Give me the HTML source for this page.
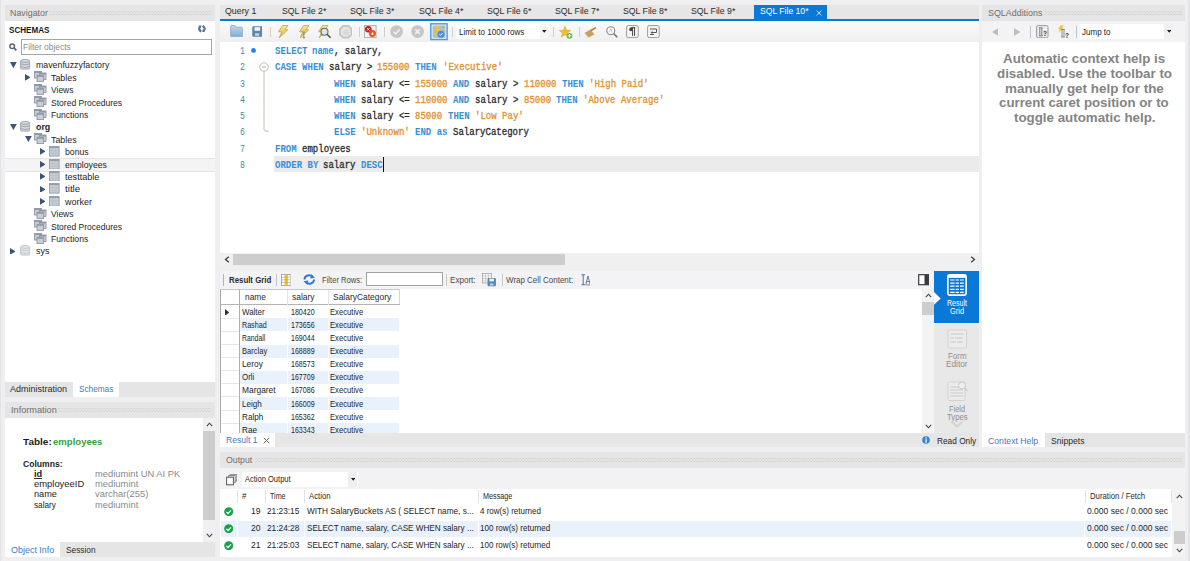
<!DOCTYPE html><html><head><meta charset="utf-8"><style>
html,body{margin:0;padding:0;}
body{width:1190px;height:561px;overflow:hidden;position:relative;background:#efeff1;font-family:'Liberation Sans',sans-serif;}
.r{position:absolute;}
.t{position:absolute;white-space:pre;transform-origin:0 0;}
</style></head><body><div class="r" style="left:0px;top:0px;width:1px;height:561px;background:#e3e3e5;"></div><div class="r" style="left:5px;top:5px;width:210px;height:16px;background:#e5e5e5;"></div><span class="t" style="left:10.00px;top:7.76px;font-size:9.5px;line-height:9.5px;color:#6e6e6e;transform:scaleX(0.9318);">Navigator</span><svg class="r" style="left:49px;top:10.8px" width="162" height="4.6"><defs><pattern id="gp49_13" width="3" height="3.2" patternUnits="userSpaceOnUse"><rect x="0.6" y="0" width="1.1" height="0.9" fill="#c6c6c6"/><rect x="2.1" y="1.6" width="1.1" height="0.9" fill="#c6c6c6"/></pattern></defs><rect x="0" y="0.1" width="162" height="4.4" fill="url(#gp49_13)"/></svg><div class="r" style="left:5px;top:21px;width:210px;height:361px;background:#fff;"></div><span class="t" style="left:9.20px;top:24.76px;font-size:9.5px;line-height:9.5px;color:#1a1a1a;font-weight:bold;transform:scaleX(0.8502);">SCHEMAS</span><svg class="r" style="left:196.8px;top:24.6px;" width="9.6" height="8" viewBox="0 0 9.6 8"><path d="M3.2 1.6 Q0.6 4 4.2 6.6" fill="none" stroke="#5f7596" stroke-width="2.3"/><polygon points="1.6,0.6 4.6,0.6 3.4,3.4" fill="#5f7596"/><path d="M5.6 0.9 Q9.2 3.2 6.4 6" fill="none" stroke="#5f7596" stroke-width="2.3"/><polygon points="8,7 5,7 6.2,4.3" fill="#5f7596"/></svg><svg class="r" style="left:8.5px;top:43px;" width="8" height="8" viewBox="0 0 8 8"><circle cx="3.2" cy="3.2" r="2.3" fill="none" stroke="#5b6675" stroke-width="1.5"/><path d="M4.9 4.9 L7.4 7.4" stroke="#5b6675" stroke-width="1.8"/></svg><div class="r" style="left:21px;top:39.2px;width:188.5px;height:13.6px;background:#fff;border:1px solid #a6a6a6;"></div><span class="t" style="left:23.00px;top:41.76px;font-size:9.5px;line-height:9.5px;color:#8c8c8c;transform:scaleX(0.8856);">Filter objects</span><svg class="r" style="left:10px;top:62.0px;" width="6.8" height="6.1" viewBox="0 0 6.8 6.1"><polygon points="0,0 6.8,0 3.4,6.1" fill="#3d5473"/></svg><svg class="r" style="left:20.3px;top:58.8px;" width="10.5" height="11" viewBox="0 0 10.5 11"><rect x="0.6" y="1.5" width="9" height="8.6" rx="1" fill="#d3d7de" stroke="#9aa2ad" stroke-width="0.9"/><ellipse cx="5.1" cy="1.9" rx="4.5" ry="1.5" fill="#d3d7de" stroke="#9aa2ad" stroke-width="0.9"/><path d="M0.6 4.8 Q5.1 6.8 9.6 4.8 M0.6 7.6 Q5.1 9.6 9.6 7.6" fill="none" stroke="#9aa2ad" stroke-width="0.9"/></svg><span class="t" style="left:35.70px;top:60.36px;font-size:9.5px;line-height:9.5px;color:#1e1e1e;transform:scaleX(0.9255);">mavenfuzzyfactory</span><svg class="r" style="left:24.7px;top:74.0px;" width="5.8" height="6.8" viewBox="0 0 5.8 6.8"><polygon points="0,0 5.8,3.4 0,6.8" fill="#3d5473"/></svg><svg class="r" style="left:34px;top:71.30000000000001px;" width="12.5" height="11" viewBox="0 0 12.5 11"><rect x="0.5" y="0.5" width="7" height="6.5" fill="#c9ced6" stroke="#8f98a5" stroke-width="0.9"/><rect x="0.5" y="0.5" width="7" height="1.5" fill="#8f98a5"/><rect x="5.5" y="2" width="6.5" height="6.5" fill="#c9ced6" stroke="#8f98a5" stroke-width="0.9"/><rect x="5.5" y="2" width="6.5" height="1.5" fill="#8f98a5"/><rect x="3" y="4.3" width="6.5" height="6.3" fill="#c9ced6" stroke="#8f98a5" stroke-width="0.9"/><rect x="3" y="4.3" width="6.5" height="1.5" fill="#8f98a5"/></svg><span class="t" style="left:50.60px;top:72.76px;font-size:9.5px;line-height:9.5px;color:#1e1e1e;transform:scaleX(0.9320);">Tables</span><svg class="r" style="left:34px;top:83.7px;" width="12.5" height="11" viewBox="0 0 12.5 11"><rect x="0.5" y="0.5" width="7" height="6.5" fill="#c9ced6" stroke="#8f98a5" stroke-width="0.9"/><rect x="0.5" y="0.5" width="7" height="1.5" fill="#8f98a5"/><rect x="5.5" y="2" width="6.5" height="6.5" fill="#c9ced6" stroke="#8f98a5" stroke-width="0.9"/><rect x="5.5" y="2" width="6.5" height="1.5" fill="#8f98a5"/><rect x="3" y="4.3" width="6.5" height="6.3" fill="#c9ced6" stroke="#8f98a5" stroke-width="0.9"/><rect x="3" y="4.3" width="6.5" height="1.5" fill="#8f98a5"/></svg><span class="t" style="left:50.60px;top:85.16px;font-size:9.5px;line-height:9.5px;color:#1e1e1e;transform:scaleX(0.8939);">Views</span><svg class="r" style="left:34px;top:96.10000000000001px;" width="12.5" height="11" viewBox="0 0 12.5 11"><rect x="0.5" y="0.5" width="7" height="6.5" fill="#c9ced6" stroke="#8f98a5" stroke-width="0.9"/><rect x="0.5" y="0.5" width="7" height="1.5" fill="#8f98a5"/><rect x="5.5" y="2" width="6.5" height="6.5" fill="#c9ced6" stroke="#8f98a5" stroke-width="0.9"/><rect x="5.5" y="2" width="6.5" height="1.5" fill="#8f98a5"/><rect x="3" y="4.3" width="6.5" height="6.3" fill="#c9ced6" stroke="#8f98a5" stroke-width="0.9"/><rect x="3" y="4.3" width="6.5" height="1.5" fill="#8f98a5"/></svg><span class="t" style="left:50.60px;top:97.56px;font-size:9.5px;line-height:9.5px;color:#1e1e1e;transform:scaleX(0.8975);">Stored Procedures</span><svg class="r" style="left:34px;top:108.5px;" width="12.5" height="11" viewBox="0 0 12.5 11"><rect x="0.5" y="0.5" width="7" height="6.5" fill="#c9ced6" stroke="#8f98a5" stroke-width="0.9"/><rect x="0.5" y="0.5" width="7" height="1.5" fill="#8f98a5"/><rect x="5.5" y="2" width="6.5" height="6.5" fill="#c9ced6" stroke="#8f98a5" stroke-width="0.9"/><rect x="5.5" y="2" width="6.5" height="1.5" fill="#8f98a5"/><rect x="3" y="4.3" width="6.5" height="6.3" fill="#c9ced6" stroke="#8f98a5" stroke-width="0.9"/><rect x="3" y="4.3" width="6.5" height="1.5" fill="#8f98a5"/></svg><span class="t" style="left:50.60px;top:109.96px;font-size:9.5px;line-height:9.5px;color:#1e1e1e;transform:scaleX(0.9032);">Functions</span><svg class="r" style="left:10px;top:124.0px;" width="6.8" height="6.1" viewBox="0 0 6.8 6.1"><polygon points="0,0 6.8,0 3.4,6.1" fill="#3d5473"/></svg><svg class="r" style="left:20.3px;top:120.8px;" width="10.5" height="11" viewBox="0 0 10.5 11"><rect x="0.6" y="1.5" width="9" height="8.6" rx="1" fill="#d3d7de" stroke="#9aa2ad" stroke-width="0.9"/><ellipse cx="5.1" cy="1.9" rx="4.5" ry="1.5" fill="#d3d7de" stroke="#9aa2ad" stroke-width="0.9"/><path d="M0.6 4.8 Q5.1 6.8 9.6 4.8 M0.6 7.6 Q5.1 9.6 9.6 7.6" fill="none" stroke="#9aa2ad" stroke-width="0.9"/></svg><span class="t" style="left:35.70px;top:122.36px;font-size:9.5px;line-height:9.5px;color:#1e1e1e;font-weight:bold;transform:scaleX(0.9273);">org</span><svg class="r" style="left:25px;top:136.4px;" width="6.8" height="6.1" viewBox="0 0 6.8 6.1"><polygon points="0,0 6.8,0 3.4,6.1" fill="#3d5473"/></svg><svg class="r" style="left:34px;top:133.3px;" width="12.5" height="11" viewBox="0 0 12.5 11"><rect x="0.5" y="0.5" width="7" height="6.5" fill="#c9ced6" stroke="#8f98a5" stroke-width="0.9"/><rect x="0.5" y="0.5" width="7" height="1.5" fill="#8f98a5"/><rect x="5.5" y="2" width="6.5" height="6.5" fill="#c9ced6" stroke="#8f98a5" stroke-width="0.9"/><rect x="5.5" y="2" width="6.5" height="1.5" fill="#8f98a5"/><rect x="3" y="4.3" width="6.5" height="6.3" fill="#c9ced6" stroke="#8f98a5" stroke-width="0.9"/><rect x="3" y="4.3" width="6.5" height="1.5" fill="#8f98a5"/></svg><span class="t" style="left:50.60px;top:134.76px;font-size:9.5px;line-height:9.5px;color:#1e1e1e;transform:scaleX(0.9320);">Tables</span><svg class="r" style="left:39.7px;top:148.39999999999998px;" width="5.8" height="6.8" viewBox="0 0 5.8 6.8"><polygon points="0,0 5.8,3.4 0,6.8" fill="#3d5473"/></svg><svg class="r" style="left:49.3px;top:146.1px;" width="10.6" height="10.6" viewBox="0 0 10.6 10.6"><rect x="0.5" y="0.5" width="9.6" height="9.6" fill="#c8ced7" stroke="#949dab" stroke-width="0.9"/><rect x="0.5" y="0.5" width="9.6" height="1.6" fill="#949dab"/><path d="M3.7 2 V10 M6.9 2 V10 M0.5 4.7 H10 M0.5 7.4 H10" stroke="#b3bac4" stroke-width="0.6"/></svg><span class="t" style="left:65.40px;top:147.16px;font-size:9.5px;line-height:9.5px;color:#1e1e1e;transform:scaleX(0.9115);">bonus</span><div class="r" style="left:5px;top:157.9px;width:210px;height:11.8px;background:#f4f4f4;border-top:0.6px solid #e6e6e6;border-bottom:0.6px solid #e6e6e6;"></div><svg class="r" style="left:39.7px;top:160.8px;" width="5.8" height="6.8" viewBox="0 0 5.8 6.8"><polygon points="0,0 5.8,3.4 0,6.8" fill="#3d5473"/></svg><svg class="r" style="left:49.3px;top:158.50000000000003px;" width="10.6" height="10.6" viewBox="0 0 10.6 10.6"><rect x="0.5" y="0.5" width="9.6" height="9.6" fill="#c8ced7" stroke="#949dab" stroke-width="0.9"/><rect x="0.5" y="0.5" width="9.6" height="1.6" fill="#949dab"/><path d="M3.7 2 V10 M6.9 2 V10 M0.5 4.7 H10 M0.5 7.4 H10" stroke="#b3bac4" stroke-width="0.6"/></svg><span class="t" style="left:65.40px;top:159.56px;font-size:9.5px;line-height:9.5px;color:#1e1e1e;transform:scaleX(0.9118);">employees</span><svg class="r" style="left:39.7px;top:173.2px;" width="5.8" height="6.8" viewBox="0 0 5.8 6.8"><polygon points="0,0 5.8,3.4 0,6.8" fill="#3d5473"/></svg><svg class="r" style="left:49.3px;top:170.9px;" width="10.6" height="10.6" viewBox="0 0 10.6 10.6"><rect x="0.5" y="0.5" width="9.6" height="9.6" fill="#c8ced7" stroke="#949dab" stroke-width="0.9"/><rect x="0.5" y="0.5" width="9.6" height="1.6" fill="#949dab"/><path d="M3.7 2 V10 M6.9 2 V10 M0.5 4.7 H10 M0.5 7.4 H10" stroke="#b3bac4" stroke-width="0.6"/></svg><span class="t" style="left:65.40px;top:171.96px;font-size:9.5px;line-height:9.5px;color:#1e1e1e;transform:scaleX(0.9576);">testtable</span><svg class="r" style="left:39.7px;top:185.6px;" width="5.8" height="6.8" viewBox="0 0 5.8 6.8"><polygon points="0,0 5.8,3.4 0,6.8" fill="#3d5473"/></svg><svg class="r" style="left:49.3px;top:183.3px;" width="10.6" height="10.6" viewBox="0 0 10.6 10.6"><rect x="0.5" y="0.5" width="9.6" height="9.6" fill="#c8ced7" stroke="#949dab" stroke-width="0.9"/><rect x="0.5" y="0.5" width="9.6" height="1.6" fill="#949dab"/><path d="M3.7 2 V10 M6.9 2 V10 M0.5 4.7 H10 M0.5 7.4 H10" stroke="#b3bac4" stroke-width="0.6"/></svg><span class="t" style="left:65.40px;top:184.36px;font-size:9.5px;line-height:9.5px;color:#1e1e1e;transform:scaleX(1.0272);">title</span><svg class="r" style="left:39.7px;top:198.0px;" width="5.8" height="6.8" viewBox="0 0 5.8 6.8"><polygon points="0,0 5.8,3.4 0,6.8" fill="#3d5473"/></svg><svg class="r" style="left:49.3px;top:195.70000000000002px;" width="10.6" height="10.6" viewBox="0 0 10.6 10.6"><rect x="0.5" y="0.5" width="9.6" height="9.6" fill="#c8ced7" stroke="#949dab" stroke-width="0.9"/><rect x="0.5" y="0.5" width="9.6" height="1.6" fill="#949dab"/><path d="M3.7 2 V10 M6.9 2 V10 M0.5 4.7 H10 M0.5 7.4 H10" stroke="#b3bac4" stroke-width="0.6"/></svg><span class="t" style="left:65.40px;top:196.76px;font-size:9.5px;line-height:9.5px;color:#1e1e1e;transform:scaleX(0.9433);">worker</span><svg class="r" style="left:34px;top:207.70000000000002px;" width="12.5" height="11" viewBox="0 0 12.5 11"><rect x="0.5" y="0.5" width="7" height="6.5" fill="#c9ced6" stroke="#8f98a5" stroke-width="0.9"/><rect x="0.5" y="0.5" width="7" height="1.5" fill="#8f98a5"/><rect x="5.5" y="2" width="6.5" height="6.5" fill="#c9ced6" stroke="#8f98a5" stroke-width="0.9"/><rect x="5.5" y="2" width="6.5" height="1.5" fill="#8f98a5"/><rect x="3" y="4.3" width="6.5" height="6.3" fill="#c9ced6" stroke="#8f98a5" stroke-width="0.9"/><rect x="3" y="4.3" width="6.5" height="1.5" fill="#8f98a5"/></svg><span class="t" style="left:50.60px;top:209.16px;font-size:9.5px;line-height:9.5px;color:#1e1e1e;transform:scaleX(0.8939);">Views</span><svg class="r" style="left:34px;top:220.10000000000002px;" width="12.5" height="11" viewBox="0 0 12.5 11"><rect x="0.5" y="0.5" width="7" height="6.5" fill="#c9ced6" stroke="#8f98a5" stroke-width="0.9"/><rect x="0.5" y="0.5" width="7" height="1.5" fill="#8f98a5"/><rect x="5.5" y="2" width="6.5" height="6.5" fill="#c9ced6" stroke="#8f98a5" stroke-width="0.9"/><rect x="5.5" y="2" width="6.5" height="1.5" fill="#8f98a5"/><rect x="3" y="4.3" width="6.5" height="6.3" fill="#c9ced6" stroke="#8f98a5" stroke-width="0.9"/><rect x="3" y="4.3" width="6.5" height="1.5" fill="#8f98a5"/></svg><span class="t" style="left:50.60px;top:221.56px;font-size:9.5px;line-height:9.5px;color:#1e1e1e;transform:scaleX(0.8975);">Stored Procedures</span><svg class="r" style="left:34px;top:232.5px;" width="12.5" height="11" viewBox="0 0 12.5 11"><rect x="0.5" y="0.5" width="7" height="6.5" fill="#c9ced6" stroke="#8f98a5" stroke-width="0.9"/><rect x="0.5" y="0.5" width="7" height="1.5" fill="#8f98a5"/><rect x="5.5" y="2" width="6.5" height="6.5" fill="#c9ced6" stroke="#8f98a5" stroke-width="0.9"/><rect x="5.5" y="2" width="6.5" height="1.5" fill="#8f98a5"/><rect x="3" y="4.3" width="6.5" height="6.3" fill="#c9ced6" stroke="#8f98a5" stroke-width="0.9"/><rect x="3" y="4.3" width="6.5" height="1.5" fill="#8f98a5"/></svg><span class="t" style="left:50.60px;top:233.96px;font-size:9.5px;line-height:9.5px;color:#1e1e1e;transform:scaleX(0.9032);">Functions</span><svg class="r" style="left:9.7px;top:247.6px;" width="5.8" height="6.8" viewBox="0 0 5.8 6.8"><polygon points="0,0 5.8,3.4 0,6.8" fill="#3d5473"/></svg><svg class="r" style="left:20.3px;top:244.8px;" width="10.5" height="11" viewBox="0 0 10.5 11"><rect x="0.6" y="1.5" width="9" height="8.6" rx="1" fill="#e3e6ea" stroke="#c0c5cc" stroke-width="0.9"/><ellipse cx="5.1" cy="1.9" rx="4.5" ry="1.5" fill="#e3e6ea" stroke="#c0c5cc" stroke-width="0.9"/><path d="M0.6 4.8 Q5.1 6.8 9.6 4.8 M0.6 7.6 Q5.1 9.6 9.6 7.6" fill="none" stroke="#c0c5cc" stroke-width="0.9"/></svg><span class="t" style="left:35.70px;top:246.36px;font-size:9.5px;line-height:9.5px;color:#1e1e1e;transform:scaleX(0.9404);">sys</span><div class="r" style="left:5px;top:382px;width:210px;height:15px;background:#e5e5e5;"></div><div class="r" style="left:73px;top:382px;width:46px;height:15px;background:#fff;"></div><span class="t" style="left:10.00px;top:384.46px;font-size:9.5px;line-height:9.5px;color:#2b2b2b;transform:scaleX(0.9468);">Administration</span><span class="t" style="left:78.50px;top:384.46px;font-size:9.5px;line-height:9.5px;color:#3a7cc3;transform:scaleX(0.8660);">Schemas</span><div class="r" style="left:5px;top:402px;width:210px;height:16px;background:#e5e5e5;"></div><span class="t" style="left:10.50px;top:404.56px;font-size:9.5px;line-height:9.5px;color:#6e6e6e;transform:scaleX(0.9636);">Information</span><svg class="r" style="left:58px;top:407.8px" width="153" height="4.6"><defs><pattern id="gp58_410" width="3" height="3.2" patternUnits="userSpaceOnUse"><rect x="0.6" y="0" width="1.1" height="0.9" fill="#c6c6c6"/><rect x="2.1" y="1.6" width="1.1" height="0.9" fill="#c6c6c6"/></pattern></defs><rect x="0" y="0.1" width="153" height="4.4" fill="url(#gp58_410)"/></svg><div class="r" style="left:5px;top:418px;width:210px;height:124.2px;background:#fff;"></div><div class="r" style="left:203px;top:418px;width:11.5px;height:124.2px;background:#f0f0f0;"></div><div class="r" style="left:203px;top:431px;width:11.5px;height:88.5px;background:#cdcdcd;"></div><svg class="r" style="left:205.5px;top:422px;" width="7" height="5" viewBox="0 0 7 5"><path d="M0.8 4.2 L3.5 1.2 L6.2 4.2" fill="none" stroke="#404040" stroke-width="1.1"/></svg><svg class="r" style="left:205.5px;top:533px;" width="7" height="5" viewBox="0 0 7 5"><path d="M0.8 0.8 L3.5 3.8 L6.2 0.8" fill="none" stroke="#404040" stroke-width="1.1"/></svg><span class="t" style="left:22.80px;top:436.96px;font-size:9.5px;line-height:9.5px;color:#1e1e1e;font-weight:bold;transform:scaleX(1.0557);">Table:</span><span class="t" style="left:53.30px;top:436.96px;font-size:9.5px;line-height:9.5px;color:#3aa03a;font-weight:bold;transform:scaleX(1.0056);">employees</span><span class="t" style="left:22.80px;top:458.66px;font-size:9.5px;line-height:9.5px;color:#1e1e1e;font-weight:bold;transform:scaleX(0.9016);">Columns:</span><span class="t" style="left:33.70px;top:469.73px;font-size:9.3px;line-height:9.3px;color:#1e1e1e;font-weight:bold;transform:scaleX(0.9921);">id</span><span class="t" style="left:94.70px;top:469.73px;font-size:9.3px;line-height:9.3px;color:#8a8a8a;transform:scaleX(1.0067);">mediumint UN AI PK</span><span class="t" style="left:33.70px;top:480.03px;font-size:9.3px;line-height:9.3px;color:#1e1e1e;transform:scaleX(1.0119);">employeeID</span><span class="t" style="left:94.70px;top:480.03px;font-size:9.3px;line-height:9.3px;color:#8a8a8a;transform:scaleX(1.0095);">mediumint</span><span class="t" style="left:33.70px;top:490.33px;font-size:9.3px;line-height:9.3px;color:#1e1e1e;transform:scaleX(0.9843);">name</span><span class="t" style="left:94.70px;top:490.33px;font-size:9.3px;line-height:9.3px;color:#8a8a8a;transform:scaleX(1.0110);">varchar(255)</span><span class="t" style="left:33.70px;top:500.63px;font-size:9.3px;line-height:9.3px;color:#1e1e1e;transform:scaleX(0.8786);">salary</span><span class="t" style="left:94.70px;top:500.63px;font-size:9.3px;line-height:9.3px;color:#8a8a8a;transform:scaleX(1.0095);">mediumint</span><div class="r" style="left:33.7px;top:478.3px;width:8.6px;height:0.8px;background:#333;"></div><div class="r" style="left:5px;top:542.2px;width:210px;height:14.4px;background:#e5e5e5;"></div><div class="r" style="left:5px;top:542.2px;width:55.4px;height:14.4px;background:#fff;"></div><span class="t" style="left:10.50px;top:544.56px;font-size:9.5px;line-height:9.5px;color:#3a7cc3;transform:scaleX(0.9423);">Object Info</span><span class="t" style="left:66.00px;top:544.56px;font-size:9.5px;line-height:9.5px;color:#2b2b2b;transform:scaleX(0.8754);">Session</span><div class="r" style="left:220px;top:5px;width:759.3px;height:14.3px;background:#e6e6e6;"></div><span class="t" style="left:225.10px;top:6.36px;font-size:9.5px;line-height:9.5px;color:#2a2a2a;transform:scaleX(0.9291);">Query 1</span><span class="t" style="left:282.30px;top:6.36px;font-size:9.5px;line-height:9.5px;color:#2a2a2a;transform:scaleX(0.9184);">SQL File 2*</span><span class="t" style="left:350.40px;top:6.36px;font-size:9.5px;line-height:9.5px;color:#2a2a2a;transform:scaleX(0.9184);">SQL File 3*</span><span class="t" style="left:418.80px;top:6.36px;font-size:9.5px;line-height:9.5px;color:#2a2a2a;transform:scaleX(0.9184);">SQL File 4*</span><span class="t" style="left:487.00px;top:6.36px;font-size:9.5px;line-height:9.5px;color:#2a2a2a;transform:scaleX(0.9184);">SQL File 6*</span><span class="t" style="left:555.10px;top:6.36px;font-size:9.5px;line-height:9.5px;color:#2a2a2a;transform:scaleX(0.9184);">SQL File 7*</span><span class="t" style="left:623.20px;top:6.36px;font-size:9.5px;line-height:9.5px;color:#2a2a2a;transform:scaleX(0.9184);">SQL File 8*</span><span class="t" style="left:691.30px;top:6.36px;font-size:9.5px;line-height:9.5px;color:#2a2a2a;transform:scaleX(0.9184);">SQL File 9*</span><div class="r" style="left:753.9px;top:4.9px;width:72.9px;height:14.4px;background:#0a78d7;"></div><span class="t" style="left:759.70px;top:6.36px;font-size:9.5px;line-height:9.5px;color:#ffffff;transform:scaleX(0.9063);">SQL File 10*</span><svg class="r" style="left:815.5px;top:10.3px;" width="6" height="6" viewBox="0 0 6 6"><path d="M0.6 0.6 L5.4 5.4 M5.4 0.6 L0.6 5.4" stroke="#d8e8f8" stroke-width="0.9"/></svg><div class="r" style="left:220px;top:19.3px;width:759.3px;height:2px;background:#0a78d7;"></div><div class="r" style="left:220px;top:21.3px;width:759.3px;height:20.7px;background:linear-gradient(#fbfbfb,#f6f6f6 40%,#efefef);"></div><svg class="r" style="left:230px;top:24.8px;" width="13" height="12.5" viewBox="0 0 13 12.5"><defs><linearGradient id="fg" x1="0" y1="0" x2="0" y2="1"><stop offset="0" stop-color="#bcd8ec"/><stop offset="1" stop-color="#86add0"/></linearGradient></defs><path d="M0.6 2 Q0.6 0.5 2 0.5 L5 0.5 L6.2 2.2 L11.4 2.2 Q12.6 2.2 12.6 3.4 L12.6 10.9 Q12.6 11.8 11.6 11.8 L1.6 11.8 Q0.6 11.8 0.6 10.9 Z" fill="url(#fg)" stroke="#7fa5c6" stroke-width="0.7"/></svg><svg class="r" style="left:251.7px;top:26px;" width="10.6" height="11" viewBox="0 0 10.6 11"><rect x="0.3" y="0.3" width="10" height="10.4" rx="1.2" fill="#5a85ab"/><rect x="2.5" y="1.2" width="5.6" height="3.6" fill="#f4f7fa"/><rect x="3" y="7.2" width="4.2" height="2.6" fill="#c7d3de"/></svg><div class="r" style="left:270.3px;top:26.5px;width:1px;height:10.5px;background:#cdcdcd;"></div><svg class="r" style="left:276.8px;top:25px;" width="12" height="13.5" viewBox="0 0 12 13.5"><defs><linearGradient id="bg" x1="0" y1="0" x2="0" y2="1"><stop offset="0" stop-color="#f6eab0"/><stop offset="0.5" stop-color="#e8cf5a"/><stop offset="1" stop-color="#d9bb48"/></linearGradient></defs><path d="M5.5 0.5 L11 0.5 L7.8 4.8 L10.8 4.8 L2.2 12.8 L4.8 6.8 L1.5 6.8 Z" fill="url(#bg)" stroke="#c4a24a" stroke-width="0.8"/></svg><svg class="r" style="left:298px;top:25px;" width="12" height="13.5" viewBox="0 0 12 13.5"><defs><linearGradient id="bg" x1="0" y1="0" x2="0" y2="1"><stop offset="0" stop-color="#f6eab0"/><stop offset="0.5" stop-color="#e8cf5a"/><stop offset="1" stop-color="#d9bb48"/></linearGradient></defs><path d="M5.5 0.5 L11 0.5 L7.8 4.8 L10.8 4.8 L2.2 12.8 L4.8 6.8 L1.5 6.8 Z" fill="url(#bg)" stroke="#c4a24a" stroke-width="0.8"/><path d="M5.8 7 L5.8 12.8 M4.4 7 H7.2 M4.4 12.8 H7.2" stroke="#8a8a8a" stroke-width="1.1"/></svg><svg class="r" style="left:317.3px;top:25px;" width="15" height="13.5" viewBox="0 0 15 13.5"><defs><linearGradient id="bg" x1="0" y1="0" x2="0" y2="1"><stop offset="0" stop-color="#f6eab0"/><stop offset="0.5" stop-color="#e8cf5a"/><stop offset="1" stop-color="#d9bb48"/></linearGradient></defs><path d="M5.5 0.5 L11 0.5 L7.8 4.8 L10.8 4.8 L2.2 12.8 L4.8 6.8 L1.5 6.8 Z" fill="url(#bg)" stroke="#c4a24a" stroke-width="0.8"/><circle cx="7.5" cy="6.8" r="3.5" fill="#d8e6ee" stroke="#6a6a6a" stroke-width="1.1"/><path d="M10 9.3 L13.6 12.8" stroke="#505050" stroke-width="1.6"/></svg><svg class="r" style="left:338.5px;top:25px;" width="13.5" height="13.5" viewBox="0 0 13.5 13.5"><polygon points="4.1,0.9 9.4,0.9 12.6,4.1 12.6,9.4 9.4,12.6 4.1,12.6 0.9,9.4 0.9,4.1" fill="#e4e4e4" stroke="#c4c4c4" stroke-width="1.8"/><path d="M5 9.8 V5.6 M6.6 9.8 V4.6 M8.2 9.8 V5 M9.4 9.6 V7" stroke="#d2d2d2" stroke-width="1"/></svg><div class="r" style="left:359px;top:26.5px;width:1px;height:10.5px;background:#cdcdcd;"></div><svg class="r" style="left:364.2px;top:25.3px;" width="12.6" height="13" viewBox="0 0 12.6 13"><rect x="0.5" y="0.5" width="11.6" height="12" fill="#f2f2f2" stroke="#acacac" stroke-width="0.9"/><circle cx="4.3" cy="4.3" r="3.3" fill="#c61f24"/><circle cx="8.4" cy="8.6" r="3.5" fill="#e5531f"/><path d="M3.1 3.1 L5.5 5.5 M5.5 3.1 L3.1 5.5" stroke="#fff" stroke-width="0.9"/><rect x="7.6" y="7.4" width="1.8" height="2.6" rx="0.6" fill="#fff"/></svg><div class="r" style="left:384.4px;top:26.5px;width:1px;height:10.5px;background:#cdcdcd;"></div><svg class="r" style="left:389.7px;top:25px;" width="13.2" height="13.2" viewBox="0 0 13.2 13.2"><circle cx="6.6" cy="6.6" r="6.4" fill="#c6c6c6"/><path d="M3.6 6.8 L5.7 8.9 L9.6 4.6" fill="none" stroke="#f2f2f2" stroke-width="1.5"/></svg><svg class="r" style="left:410.6px;top:25px;" width="13.2" height="13.2" viewBox="0 0 13.2 13.2"><circle cx="6.6" cy="6.6" r="6.4" fill="#c6c6c6"/><path d="M4.3 4.3 L8.9 8.9 M8.9 4.3 L4.3 8.9" stroke="#f2f2f2" stroke-width="1.5"/></svg><svg class="r" style="left:429.9px;top:23.2px;" width="18" height="17.4" viewBox="0 0 18 17.4"><rect x="0.8" y="0.8" width="16.3" height="15.8" fill="#e4eef8" stroke="#4c9be6" stroke-width="1.4"/><rect x="2.6" y="2.4" width="12.8" height="12.6" rx="1.5" fill="#bdbdbd"/><path d="M6.5 3.2 L10.5 3.2 L8.2 6.3 L10.3 6.3 L4.3 12 L6.1 7.8 L3.8 7.8 Z" fill="#e9c53c"/><circle cx="11" cy="11.2" r="3.5" fill="#4a8fdc"/><path d="M9.3 11.2 L10.6 12.4 L12.7 10" fill="none" stroke="#fff" stroke-width="0.9"/><rect x="12.3" y="3.2" width="2" height="1.6" fill="#7cc46a"/></svg><div class="r" style="left:451.9px;top:26.5px;width:1px;height:10.5px;background:#cdcdcd;"></div><div class="r" style="left:455.8px;top:23.8px;width:92.7px;height:15.7px;background:#ffffff;"></div><div class="r" style="left:539.7px;top:24.2px;width:8.8px;height:15px;background:#f6f6f6;"></div><span class="t" style="left:458.60px;top:27.16px;font-size:9.5px;line-height:9.5px;color:#1e1e1e;transform:scaleX(0.8483);">Limit to 1000 rows</span><svg class="r" style="left:542px;top:29.8px;" width="4.6" height="3" viewBox="0 0 4.6 3"><polygon points="0,0 4.5,0 2.25,2.8" fill="#1a1a1a"/></svg><div class="r" style="left:553.4px;top:26.5px;width:1px;height:10.5px;background:#cdcdcd;"></div><svg class="r" style="left:559px;top:26.3px;" width="14.2" height="12.6" viewBox="0 0 14.2 12.6"><polygon points="6,0.3 7.6,4.2 11.8,4.4 8.5,7 9.7,11 6,8.7 2.3,11 3.5,7 0.2,4.4 4.4,4.2" fill="#f2bd2c" stroke="#d9a01e" stroke-width="0.5"/><circle cx="10.5" cy="9.8" r="2.9" fill="#5fb85a"/><path d="M10.5 8 V11.6 M8.7 9.8 H12.3" stroke="#fff" stroke-width="1"/></svg><div class="r" style="left:578.5px;top:26.5px;width:1px;height:10.5px;background:#cdcdcd;"></div><svg class="r" style="left:584.3px;top:26.8px;" width="13.2" height="10.8" viewBox="0 0 13.2 10.8"><path d="M0.5 6 L6.5 2.5 L10.5 7.5 L4.5 10.5 Z" fill="#c9a15e"/><path d="M7 3.5 L11.8 0.6" stroke="#b07c3c" stroke-width="1.6"/><path d="M1 10.6 H9" stroke="#e0e0e0" stroke-width="0.6"/></svg><svg class="r" style="left:605.6px;top:25.5px;" width="12" height="12.2" viewBox="0 0 12 12.2"><circle cx="4.8" cy="4.8" r="4" fill="#fafafa" stroke="#8a8a8a" stroke-width="1.1"/><path d="M7.8 7.8 L11.3 11.3" stroke="#707070" stroke-width="1.6"/><path d="M3.3 6.3 L4.8 2.8 L6.3 6.3" fill="none" stroke="#b0b0b0" stroke-width="0.7"/></svg><svg class="r" style="left:626.3px;top:25px;" width="12.8" height="13.2" viewBox="0 0 12.8 13.2"><rect x="0.6" y="0.6" width="11.6" height="12" rx="1.5" fill="#f5f5f5" stroke="#9c9c9c" stroke-width="1"/><path d="M5.2 2.6 H9.2 M6.6 2.6 V11 M8.6 2.6 V11" stroke="#444" stroke-width="1"/><circle cx="5" cy="4.4" r="1.8" fill="#444"/></svg><svg class="r" style="left:646.9px;top:25px;" width="12.8" height="13.2" viewBox="0 0 12.8 13.2"><rect x="0.6" y="0.6" width="11.6" height="12" rx="1.5" fill="#f5f5f5" stroke="#9c9c9c" stroke-width="1"/><path d="M3 4 H9.5 V7.5 H4.5 M3 9.5 H7" fill="none" stroke="#555" stroke-width="1"/><polygon points="3.5,7.5 5.5,6 5.5,9" fill="#555"/></svg><div class="r" style="left:220px;top:42px;width:759.3px;height:211.3px;background:#ffffff;"></div><span class="t" style="left:239.60px;top:47.04px;font-size:10px;line-height:10px;color:#3b8eb3;font-family:'Liberation Mono';transform:scaleX(0.8145);">1</span><span class="t" style="left:239.60px;top:63.31px;font-size:10px;line-height:10px;color:#3b8eb3;font-family:'Liberation Mono';transform:scaleX(0.8145);">2</span><span class="t" style="left:239.60px;top:79.58px;font-size:10px;line-height:10px;color:#3b8eb3;font-family:'Liberation Mono';transform:scaleX(0.8145);">3</span><span class="t" style="left:239.60px;top:95.85px;font-size:10px;line-height:10px;color:#3b8eb3;font-family:'Liberation Mono';transform:scaleX(0.8145);">4</span><span class="t" style="left:239.60px;top:112.12px;font-size:10px;line-height:10px;color:#3b8eb3;font-family:'Liberation Mono';transform:scaleX(0.8145);">5</span><span class="t" style="left:239.60px;top:128.39px;font-size:10px;line-height:10px;color:#3b8eb3;font-family:'Liberation Mono';transform:scaleX(0.8145);">6</span><span class="t" style="left:239.60px;top:144.66px;font-size:10px;line-height:10px;color:#3b8eb3;font-family:'Liberation Mono';transform:scaleX(0.8145);">7</span><span class="t" style="left:239.60px;top:160.93px;font-size:10px;line-height:10px;color:#3b8eb3;font-family:'Liberation Mono';transform:scaleX(0.8145);">8</span><div class="r" style="left:274.1px;top:156px;width:705.2px;height:15.8px;background:#ebebeb;"></div><svg class="r" style="left:251px;top:47.5px;" width="5" height="5" viewBox="0 0 5 5"><circle cx="2.5" cy="2.5" r="2.4" fill="#1e86e6"/></svg><svg class="r" style="left:259.3px;top:61.5px;" width="10.5" height="72" viewBox="0 0 10.5 72"><circle cx="5" cy="5" r="4.2" fill="#fff" stroke="#b8b8b0" stroke-width="0.9"/><path d="M2.8 5 H7.2" stroke="#a0a0a0" stroke-width="0.9"/><path d="M5 9.2 V67.3 Q5 69.2 7 69.2 H9.6" fill="none" stroke="#b8b8ae" stroke-width="0.9"/></svg><span class="t" style="left:274.50px;top:47.04px;font-size:10px;line-height:10px;color:#3a8fd6;font-family:'Liberation Mono';font-weight:bold;transform:scaleX(0.9029);">SELECT</span><span class="t" style="left:312.44px;top:47.04px;font-size:10px;line-height:10px;color:#3a8fd6;font-family:'Liberation Mono';font-weight:bold;transform:scaleX(0.9027);">name</span><span class="t" style="left:334.12px;top:47.04px;font-size:10px;line-height:10px;color:#2a2a2a;font-family:'Liberation Mono';transform:scaleX(0.9031);-webkit-text-stroke:0.3px #2a2a2a;">, salary,</span><span class="t" style="left:274.50px;top:63.31px;font-size:10px;line-height:10px;color:#3a8fd6;font-family:'Liberation Mono';font-weight:bold;transform:scaleX(0.9031);">CASE WHEN</span><span class="t" style="left:328.70px;top:63.31px;font-size:10px;line-height:10px;color:#2a2a2a;font-family:'Liberation Mono';transform:scaleX(0.9030);-webkit-text-stroke:0.3px #2a2a2a;">salary &gt;</span><span class="t" style="left:377.48px;top:63.31px;font-size:10px;line-height:10px;color:#e4902f;font-family:'Liberation Mono';transform:scaleX(0.9029);-webkit-text-stroke:0.3px #e4902f;">155000</span><span class="t" style="left:415.42px;top:63.31px;font-size:10px;line-height:10px;color:#3a8fd6;font-family:'Liberation Mono';font-weight:bold;transform:scaleX(0.9027);">THEN</span><span class="t" style="left:442.52px;top:63.31px;font-size:10px;line-height:10px;color:#e4902f;font-family:'Liberation Mono';transform:scaleX(0.9031);-webkit-text-stroke:0.3px #e4902f;">&#x27;Executive&#x27;</span><span class="t" style="left:334.12px;top:79.58px;font-size:10px;line-height:10px;color:#3a8fd6;font-family:'Liberation Mono';font-weight:bold;transform:scaleX(0.9027);">WHEN</span><span class="t" style="left:361.22px;top:79.58px;font-size:10px;line-height:10px;color:#2a2a2a;font-family:'Liberation Mono';transform:scaleX(0.9031);-webkit-text-stroke:0.3px #2a2a2a;">salary &lt;=</span><span class="t" style="left:415.42px;top:79.58px;font-size:10px;line-height:10px;color:#e4902f;font-family:'Liberation Mono';transform:scaleX(0.9029);-webkit-text-stroke:0.3px #e4902f;">155000</span><span class="t" style="left:453.36px;top:79.58px;font-size:10px;line-height:10px;color:#3a8fd6;font-family:'Liberation Mono';font-weight:bold;transform:scaleX(0.9025);">AND</span><span class="t" style="left:475.04px;top:79.58px;font-size:10px;line-height:10px;color:#2a2a2a;font-family:'Liberation Mono';transform:scaleX(0.9030);-webkit-text-stroke:0.3px #2a2a2a;">salary &gt;</span><span class="t" style="left:523.82px;top:79.58px;font-size:10px;line-height:10px;color:#e4902f;font-family:'Liberation Mono';transform:scaleX(0.9029);-webkit-text-stroke:0.3px #e4902f;">110000</span><span class="t" style="left:561.76px;top:79.58px;font-size:10px;line-height:10px;color:#3a8fd6;font-family:'Liberation Mono';font-weight:bold;transform:scaleX(0.9027);">THEN</span><span class="t" style="left:588.86px;top:79.58px;font-size:10px;line-height:10px;color:#e4902f;font-family:'Liberation Mono';transform:scaleX(0.9031);-webkit-text-stroke:0.3px #e4902f;">&#x27;High Paid&#x27;</span><span class="t" style="left:334.12px;top:95.85px;font-size:10px;line-height:10px;color:#3a8fd6;font-family:'Liberation Mono';font-weight:bold;transform:scaleX(0.9027);">WHEN</span><span class="t" style="left:361.22px;top:95.85px;font-size:10px;line-height:10px;color:#2a2a2a;font-family:'Liberation Mono';transform:scaleX(0.9031);-webkit-text-stroke:0.3px #2a2a2a;">salary &lt;=</span><span class="t" style="left:415.42px;top:95.85px;font-size:10px;line-height:10px;color:#e4902f;font-family:'Liberation Mono';transform:scaleX(0.9029);-webkit-text-stroke:0.3px #e4902f;">110000</span><span class="t" style="left:453.36px;top:95.85px;font-size:10px;line-height:10px;color:#3a8fd6;font-family:'Liberation Mono';font-weight:bold;transform:scaleX(0.9025);">AND</span><span class="t" style="left:475.04px;top:95.85px;font-size:10px;line-height:10px;color:#2a2a2a;font-family:'Liberation Mono';transform:scaleX(0.9030);-webkit-text-stroke:0.3px #2a2a2a;">salary &gt;</span><span class="t" style="left:523.82px;top:95.85px;font-size:10px;line-height:10px;color:#e4902f;font-family:'Liberation Mono';transform:scaleX(0.9029);-webkit-text-stroke:0.3px #e4902f;">85000</span><span class="t" style="left:556.34px;top:95.85px;font-size:10px;line-height:10px;color:#3a8fd6;font-family:'Liberation Mono';font-weight:bold;transform:scaleX(0.9027);">THEN</span><span class="t" style="left:583.44px;top:95.85px;font-size:10px;line-height:10px;color:#e4902f;font-family:'Liberation Mono';transform:scaleX(0.9032);-webkit-text-stroke:0.3px #e4902f;">&#x27;Above Average&#x27;</span><span class="t" style="left:334.12px;top:112.12px;font-size:10px;line-height:10px;color:#3a8fd6;font-family:'Liberation Mono';font-weight:bold;transform:scaleX(0.9027);">WHEN</span><span class="t" style="left:361.22px;top:112.12px;font-size:10px;line-height:10px;color:#2a2a2a;font-family:'Liberation Mono';transform:scaleX(0.9031);-webkit-text-stroke:0.3px #2a2a2a;">salary &lt;=</span><span class="t" style="left:415.42px;top:112.12px;font-size:10px;line-height:10px;color:#e4902f;font-family:'Liberation Mono';transform:scaleX(0.9029);-webkit-text-stroke:0.3px #e4902f;">85000</span><span class="t" style="left:447.94px;top:112.12px;font-size:10px;line-height:10px;color:#3a8fd6;font-family:'Liberation Mono';font-weight:bold;transform:scaleX(0.9027);">THEN</span><span class="t" style="left:475.04px;top:112.12px;font-size:10px;line-height:10px;color:#e4902f;font-family:'Liberation Mono';transform:scaleX(0.9031);-webkit-text-stroke:0.3px #e4902f;">&#x27;Low Pay&#x27;</span><span class="t" style="left:334.12px;top:128.39px;font-size:10px;line-height:10px;color:#3a8fd6;font-family:'Liberation Mono';font-weight:bold;transform:scaleX(0.9027);">ELSE</span><span class="t" style="left:361.22px;top:128.39px;font-size:10px;line-height:10px;color:#e4902f;font-family:'Liberation Mono';transform:scaleX(0.9031);-webkit-text-stroke:0.3px #e4902f;">&#x27;Unknown&#x27;</span><span class="t" style="left:415.42px;top:128.39px;font-size:10px;line-height:10px;color:#3a8fd6;font-family:'Liberation Mono';font-weight:bold;transform:scaleX(0.9029);">END as</span><span class="t" style="left:453.36px;top:128.39px;font-size:10px;line-height:10px;color:#2a2a2a;font-family:'Liberation Mono';transform:scaleX(0.9032);-webkit-text-stroke:0.3px #2a2a2a;">SalaryCategory</span><span class="t" style="left:274.50px;top:144.66px;font-size:10px;line-height:10px;color:#3a8fd6;font-family:'Liberation Mono';font-weight:bold;transform:scaleX(0.9027);">FROM</span><span class="t" style="left:301.60px;top:144.66px;font-size:10px;line-height:10px;color:#2a2a2a;font-family:'Liberation Mono';transform:scaleX(0.9031);-webkit-text-stroke:0.3px #2a2a2a;">employees</span><span class="t" style="left:274.50px;top:160.93px;font-size:10px;line-height:10px;color:#3a8fd6;font-family:'Liberation Mono';font-weight:bold;transform:scaleX(0.9030);">ORDER BY</span><span class="t" style="left:323.28px;top:160.93px;font-size:10px;line-height:10px;color:#2a2a2a;font-family:'Liberation Mono';transform:scaleX(0.9029);-webkit-text-stroke:0.3px #2a2a2a;">salary</span><span class="t" style="left:361.22px;top:160.93px;font-size:10px;line-height:10px;color:#3a8fd6;font-family:'Liberation Mono';font-weight:bold;transform:scaleX(0.9027);">DESC</span><div class="r" style="left:382.9px;top:157px;width:1px;height:14.5px;background:#111;"></div><div class="r" style="left:220px;top:253.3px;width:759.3px;height:11.7px;background:#f0f0f0;"></div><div class="r" style="left:233.1px;top:254.1px;width:332px;height:10.8px;background:#cdcdcd;"></div><svg class="r" style="left:223.5px;top:256px;" width="6" height="7" viewBox="0 0 6 7"><path d="M4.8 0.8 L1.5 3.5 L4.8 6.2" fill="none" stroke="#404040" stroke-width="1.3"/></svg><svg class="r" style="left:970px;top:256px;" width="6" height="7" viewBox="0 0 6 7"><path d="M1.2 0.8 L4.5 3.5 L1.2 6.2" fill="none" stroke="#404040" stroke-width="1.3"/></svg><div class="r" style="left:220px;top:270.5px;width:702px;height:18.3px;background:#f3f3f5;"></div><div class="r" style="left:922px;top:270.5px;width:12px;height:18.3px;background:#f3f3f5;"></div><div class="r" style="left:222.6px;top:274px;width:1px;height:12px;background:#a9b8c8;"></div><span class="t" style="left:228.80px;top:275.16px;font-size:9.5px;line-height:9.5px;color:#2a2a2a;font-weight:bold;transform:scaleX(0.8261);">Result Grid</span><div class="r" style="left:276.3px;top:274px;width:1px;height:12px;background:#c8c8c8;"></div><svg class="r" style="left:280.8px;top:273.6px;" width="10.5" height="12" viewBox="0 0 10.5 12"><rect x="0.5" y="0.5" width="9.5" height="11" fill="#fff" stroke="#9a9a9a" stroke-width="0.8"/><rect x="3.6" y="0.8" width="3.3" height="10.4" fill="#f5c518"/><path d="M0.5 3.2 H10 M0.5 5.8 H10 M0.5 8.4 H10" stroke="#9a9a9a" stroke-width="0.6"/></svg><svg class="r" style="left:302.6px;top:274px;" width="12.6" height="11" viewBox="0 0 12.6 11"><path d="M1.5 5.5 A4.6 4.2 0 0 1 9.8 3" fill="none" stroke="#2f7ad0" stroke-width="2"/><polygon points="8,0.2 12.2,3.8 7.3,4.6" fill="#2f7ad0"/><path d="M11.1 5.5 A4.6 4.2 0 0 1 2.8 8" fill="none" stroke="#2f7ad0" stroke-width="2"/><polygon points="4.6,10.8 0.4,7.2 5.3,6.4" fill="#2f7ad0"/></svg><span class="t" style="left:321.80px;top:275.16px;font-size:9.5px;line-height:9.5px;color:#4a4a4a;transform:scaleX(0.8015);">Filter Rows:</span><div class="r" style="left:365.6px;top:271.7px;width:75.6px;height:12.8px;background:#fff;border:1px solid #a3a3a3;"></div><div class="r" style="left:446.3px;top:274px;width:1px;height:12px;background:#c8c8c8;"></div><span class="t" style="left:450.40px;top:275.16px;font-size:9.5px;line-height:9.5px;color:#4a4a4a;transform:scaleX(0.8502);">Export:</span><svg class="r" style="left:482px;top:273px;" width="14.2" height="13.5" viewBox="0 0 14.2 13.5"><rect x="0.5" y="0.5" width="9" height="9.5" fill="#f6f6f6" stroke="#a6a6a6" stroke-width="0.8"/><path d="M0.5 3 H9.5 M0.5 5.5 H9.5 M0.5 8 H9.5 M3.5 0.5 V10 M6.5 0.5 V10" stroke="#b5b5b5" stroke-width="0.5"/><rect x="5.6" y="5" width="8.3" height="8.3" rx="1" fill="#4e87b8"/><rect x="7.4" y="5.6" width="4.6" height="2.8" fill="#e9f0f6"/><rect x="7.8" y="10.4" width="3.6" height="2.2" fill="#bcd0e2"/></svg><div class="r" style="left:502.2px;top:274px;width:1px;height:12px;background:#c8c8c8;"></div><span class="t" style="left:505.60px;top:275.16px;font-size:9.5px;line-height:9.5px;color:#4a4a4a;transform:scaleX(0.8390);">Wrap Cell Content:</span><svg class="r" style="left:580.9px;top:274px;" width="9.5" height="11.5" viewBox="0 0 9.5 11.5"><path d="M0.5 0.8 H4 M0.5 10.7 H4 M2.2 0.8 V10.7" stroke="#5a6f8a" stroke-width="1"/><path d="M4.8 10.5 L7 2 L9.2 10.5 M5.6 7.6 H8.4" fill="none" stroke="#5a6f8a" stroke-width="0.9"/><path d="M4.8 10.9 H9.4" stroke="#5a6f8a" stroke-width="0.8"/></svg><svg class="r" style="left:917.8px;top:274px;" width="11.5" height="11.5" viewBox="0 0 11.5 11.5"><rect x="0.7" y="0.7" width="10" height="10" fill="#fff" stroke="#3a3a3a" stroke-width="1.2"/><rect x="6.5" y="0.7" width="4.2" height="10" fill="#3a3a3a"/></svg><div class="r" style="left:220px;top:288.8px;width:702px;height:144.2px;background:#ffffff;"></div><div class="r" style="left:220.3px;top:288.6px;width:178.9px;height:144.4px;background:transparent;border-left:1px solid #a8a8a8;border-top:1.3px solid #c6c6c6;box-sizing:border-box;"></div><div class="r" style="left:398.8px;top:288.9px;width:1.2px;height:16px;background:#d6d6d6;"></div><div class="r" style="left:220.3px;top:304.2px;width:179.5px;height:1.1px;background:#b4b4b4;"></div><div class="r" style="left:239.2px;top:288.9px;width:1px;height:144.1px;background:#b0b0b0;"></div><div class="r" style="left:287.4px;top:289.5px;width:1px;height:15px;background:#e4e4e4;"></div><div class="r" style="left:328.3px;top:289.5px;width:1px;height:15px;background:#e4e4e4;"></div><span class="t" style="left:244.90px;top:292.26px;font-size:9.5px;line-height:9.5px;color:#2a2a2a;transform:scaleX(0.8794);">name</span><span class="t" style="left:292.20px;top:292.26px;font-size:9.5px;line-height:9.5px;color:#2a2a2a;transform:scaleX(0.8917);">salary</span><span class="t" style="left:333.30px;top:292.26px;font-size:9.5px;line-height:9.5px;color:#2a2a2a;transform:scaleX(0.8888);">SalaryCategory</span><div class="r" style="left:220.8px;top:317.63px;width:18.4px;height:0.8px;background:#e6e6e6;"></div><span class="t" style="left:242.20px;top:306.66px;font-size:9.5px;line-height:9.5px;color:#1e1e1e;transform:scaleX(0.8337);">Walter</span><span class="t" style="left:290.60px;top:306.66px;font-size:9.5px;line-height:9.5px;color:#1e1e1e;transform:scaleX(0.7444);">180420</span><span class="t" style="left:330.30px;top:306.66px;font-size:9.5px;line-height:9.5px;color:#1e1e1e;transform:scaleX(0.8061);">Executive</span><div class="r" style="left:240.2px;top:318.33px;width:47.2px;height:13.13px;background:#e9f1fc;"></div><div class="r" style="left:288.4px;top:318.33px;width:39.9px;height:13.13px;background:#e9f1fc;"></div><div class="r" style="left:329.3px;top:318.33px;width:69.5px;height:13.13px;background:#e9f1fc;"></div><div class="r" style="left:220.8px;top:330.76px;width:18.4px;height:0.8px;background:#e6e6e6;"></div><span class="t" style="left:242.20px;top:319.79px;font-size:9.5px;line-height:9.5px;color:#1e1e1e;transform:scaleX(0.7511);">Rashad</span><span class="t" style="left:290.60px;top:319.79px;font-size:9.5px;line-height:9.5px;color:#1e1e1e;transform:scaleX(0.7444);">173656</span><span class="t" style="left:330.30px;top:319.79px;font-size:9.5px;line-height:9.5px;color:#1e1e1e;transform:scaleX(0.8061);">Executive</span><div class="r" style="left:220.8px;top:343.89px;width:18.4px;height:0.8px;background:#e6e6e6;"></div><span class="t" style="left:242.20px;top:332.92px;font-size:9.5px;line-height:9.5px;color:#1e1e1e;transform:scaleX(0.7232);">Randall</span><span class="t" style="left:290.60px;top:332.92px;font-size:9.5px;line-height:9.5px;color:#1e1e1e;transform:scaleX(0.7444);">169044</span><span class="t" style="left:330.30px;top:332.92px;font-size:9.5px;line-height:9.5px;color:#1e1e1e;transform:scaleX(0.8061);">Executive</span><div class="r" style="left:240.2px;top:344.59px;width:47.2px;height:13.13px;background:#e9f1fc;"></div><div class="r" style="left:288.4px;top:344.59px;width:39.9px;height:13.13px;background:#e9f1fc;"></div><div class="r" style="left:329.3px;top:344.59px;width:69.5px;height:13.13px;background:#e9f1fc;"></div><div class="r" style="left:220.8px;top:357.02px;width:18.4px;height:0.8px;background:#e6e6e6;"></div><span class="t" style="left:242.20px;top:346.05px;font-size:9.5px;line-height:9.5px;color:#1e1e1e;transform:scaleX(0.7953);">Barclay</span><span class="t" style="left:290.60px;top:346.05px;font-size:9.5px;line-height:9.5px;color:#1e1e1e;transform:scaleX(0.7444);">168889</span><span class="t" style="left:330.30px;top:346.05px;font-size:9.5px;line-height:9.5px;color:#1e1e1e;transform:scaleX(0.8061);">Executive</span><div class="r" style="left:220.8px;top:370.15px;width:18.4px;height:0.8px;background:#e6e6e6;"></div><span class="t" style="left:242.20px;top:359.18px;font-size:9.5px;line-height:9.5px;color:#1e1e1e;transform:scaleX(0.8752);">Leroy</span><span class="t" style="left:290.60px;top:359.18px;font-size:9.5px;line-height:9.5px;color:#1e1e1e;transform:scaleX(0.7444);">168573</span><span class="t" style="left:330.30px;top:359.18px;font-size:9.5px;line-height:9.5px;color:#1e1e1e;transform:scaleX(0.8061);">Executive</span><div class="r" style="left:240.2px;top:370.85px;width:47.2px;height:13.13px;background:#e9f1fc;"></div><div class="r" style="left:288.4px;top:370.85px;width:39.9px;height:13.13px;background:#e9f1fc;"></div><div class="r" style="left:329.3px;top:370.85px;width:69.5px;height:13.13px;background:#e9f1fc;"></div><div class="r" style="left:220.8px;top:383.28000000000003px;width:18.4px;height:0.8px;background:#e6e6e6;"></div><span class="t" style="left:242.20px;top:372.31px;font-size:9.5px;line-height:9.5px;color:#1e1e1e;transform:scaleX(0.8389);">Orli</span><span class="t" style="left:290.60px;top:372.31px;font-size:9.5px;line-height:9.5px;color:#1e1e1e;transform:scaleX(0.7444);">167709</span><span class="t" style="left:330.30px;top:372.31px;font-size:9.5px;line-height:9.5px;color:#1e1e1e;transform:scaleX(0.8061);">Executive</span><div class="r" style="left:220.8px;top:396.41px;width:18.4px;height:0.8px;background:#e6e6e6;"></div><span class="t" style="left:242.20px;top:385.44px;font-size:9.5px;line-height:9.5px;color:#1e1e1e;transform:scaleX(0.8838);">Margaret</span><span class="t" style="left:290.60px;top:385.44px;font-size:9.5px;line-height:9.5px;color:#1e1e1e;transform:scaleX(0.7444);">167086</span><span class="t" style="left:330.30px;top:385.44px;font-size:9.5px;line-height:9.5px;color:#1e1e1e;transform:scaleX(0.8061);">Executive</span><div class="r" style="left:240.2px;top:397.11px;width:47.2px;height:13.13px;background:#e9f1fc;"></div><div class="r" style="left:288.4px;top:397.11px;width:39.9px;height:13.13px;background:#e9f1fc;"></div><div class="r" style="left:329.3px;top:397.11px;width:69.5px;height:13.13px;background:#e9f1fc;"></div><div class="r" style="left:220.8px;top:409.54px;width:18.4px;height:0.8px;background:#e6e6e6;"></div><span class="t" style="left:242.20px;top:398.57px;font-size:9.5px;line-height:9.5px;color:#1e1e1e;transform:scaleX(0.8473);">Leigh</span><span class="t" style="left:290.60px;top:398.57px;font-size:9.5px;line-height:9.5px;color:#1e1e1e;transform:scaleX(0.7444);">166009</span><span class="t" style="left:330.30px;top:398.57px;font-size:9.5px;line-height:9.5px;color:#1e1e1e;transform:scaleX(0.8061);">Executive</span><div class="r" style="left:220.8px;top:422.67px;width:18.4px;height:0.8px;background:#e6e6e6;"></div><span class="t" style="left:242.20px;top:411.70px;font-size:9.5px;line-height:9.5px;color:#1e1e1e;transform:scaleX(0.8579);">Ralph</span><span class="t" style="left:290.60px;top:411.70px;font-size:9.5px;line-height:9.5px;color:#1e1e1e;transform:scaleX(0.7444);">165362</span><span class="t" style="left:330.30px;top:411.70px;font-size:9.5px;line-height:9.5px;color:#1e1e1e;transform:scaleX(0.8061);">Executive</span><div class="r" style="left:240.2px;top:423.37px;width:47.2px;height:9.629999999999995px;background:#e9f1fc;"></div><div class="r" style="left:288.4px;top:423.37px;width:39.9px;height:9.629999999999995px;background:#e9f1fc;"></div><div class="r" style="left:329.3px;top:423.37px;width:69.5px;height:9.629999999999995px;background:#e9f1fc;"></div><div class="r" style="left:220.8px;top:435.8px;width:18.4px;height:0.8px;background:#e6e6e6;"></div><span class="t" style="left:242.20px;top:424.83px;font-size:9.5px;line-height:9.5px;color:#1e1e1e;transform:scaleX(0.8602);">Rae</span><span class="t" style="left:290.60px;top:424.83px;font-size:9.5px;line-height:9.5px;color:#1e1e1e;transform:scaleX(0.7444);">163343</span><span class="t" style="left:330.30px;top:424.83px;font-size:9.5px;line-height:9.5px;color:#1e1e1e;transform:scaleX(0.8061);">Executive</span><svg class="r" style="left:225.1px;top:308.6px;" width="4.3" height="6.8" viewBox="0 0 4.3 6.8"><polygon points="0,0 4.3,3.4 0,6.8" fill="#333"/></svg><div class="r" style="left:922px;top:288.8px;width:12px;height:144.2px;background:#f3f3f3;"></div><div class="r" style="left:922px;top:302px;width:11.5px;height:12.8px;background:#cdcdcd;"></div><svg class="r" style="left:924.5px;top:293px;" width="7" height="5" viewBox="0 0 7 5"><path d="M0.8 4.2 L3.5 1.2 L6.2 4.2" fill="none" stroke="#404040" stroke-width="1.1"/></svg><svg class="r" style="left:924.5px;top:424px;" width="7" height="5" viewBox="0 0 7 5"><path d="M0.8 0.8 L3.5 3.8 L6.2 0.8" fill="none" stroke="#404040" stroke-width="1.1"/></svg><div class="r" style="left:934.2px;top:270.5px;width:45.1px;height:162.5px;background:#e8e8e8;"></div><div class="r" style="left:934.2px;top:270.6px;width:45.1px;height:52.7px;background:#0a78d7;"></div><svg class="r" style="left:934.2px;top:292px;" width="7" height="12.8" viewBox="0 0 7 12.8"><polygon points="0,0 6.7,6.4 0,12.8" fill="#ffffff"/></svg><svg class="r" style="left:947px;top:274px;" width="20" height="22" viewBox="0 0 20 22"><rect x="0.9" y="0.9" width="18.2" height="20.2" rx="1.5" fill="#0a78d7" stroke="#ffffff" stroke-width="1.6"/><rect x="0.9" y="0.9" width="18.2" height="3" fill="#fff"/><path d="M3.2 6.0 H7.6 M8.6 6.0 H12 M13 6.0 H16.8" stroke="#fff" stroke-width="1.2"/><path d="M3.2 9.1 H7.6 M8.6 9.1 H12 M13 9.1 H16.8" stroke="#fff" stroke-width="1.2"/><path d="M3.2 12.2 H7.6 M8.6 12.2 H12 M13 12.2 H16.8" stroke="#fff" stroke-width="1.2"/><path d="M3.2 15.3 H7.6 M8.6 15.3 H12 M13 15.3 H16.8" stroke="#fff" stroke-width="1.2"/><path d="M3.2 18.4 H7.6 M8.6 18.4 H12 M13 18.4 H16.8" stroke="#fff" stroke-width="1.2"/></svg><span class="t" style="left:947.00px;top:299.30px;font-size:8.5px;line-height:8.5px;color:#ffffff;transform:scaleX(0.8301);">Result</span><span class="t" style="left:950.00px;top:307.30px;font-size:8.5px;line-height:8.5px;color:#ffffff;transform:scaleX(0.8716);">Grid</span><svg class="r" style="left:946.8px;top:328.5px;" width="20.5" height="20" viewBox="0 0 20.5 20"><rect x="1" y="1" width="18.5" height="18" rx="1" fill="#ececec" stroke="#d2d2d2" stroke-width="1"/><path d="M3.5 5 H16.5 M3.5 9 H7 M8 9 H16 M3.5 13 H9 M10 13 H16" stroke="#c8c8c8" stroke-width="1"/></svg><span class="t" style="left:947.70px;top:352.20px;font-size:8.5px;line-height:8.5px;color:#8e8e8e;transform:scaleX(0.9373);">Form</span><span class="t" style="left:946.25px;top:360.40px;font-size:8.5px;line-height:8.5px;color:#8e8e8e;transform:scaleX(0.9677);">Editor</span><svg class="r" style="left:946.5px;top:379.6px;" width="22" height="21.5" viewBox="0 0 22 21.5"><rect x="1" y="2" width="17" height="18.5" rx="1" fill="#ececec" stroke="#d2d2d2" stroke-width="1"/><path d="M3.5 7 H12 M3.5 10 H16 M3.5 13 H16 M3.5 16 H16" stroke="#c8c8c8" stroke-width="1"/><circle cx="15" cy="5.5" r="3.5" fill="#eeeeee" stroke="#cacaca" stroke-width="1"/><path d="M17.5 8 L20.5 11" stroke="#cacaca" stroke-width="1.2"/></svg><span class="t" style="left:949.00px;top:405.00px;font-size:8.5px;line-height:8.5px;color:#8e8e8e;transform:scaleX(0.8678);">Field</span><span class="t" style="left:946.70px;top:412.80px;font-size:8.5px;line-height:8.5px;color:#8e8e8e;transform:scaleX(0.9080);">Types</span><svg class="r" style="left:950px;top:419.5px;" width="14" height="8" viewBox="0 0 14 8"><path d="M1.5 1.5 L7 6.5 L12.5 1.5" fill="none" stroke="#d4d4d4" stroke-width="2.2"/></svg><div class="r" style="left:220px;top:433px;width:759.3px;height:14.3px;background:#e6e6e6;"></div><div class="r" style="left:220px;top:433px;width:55px;height:14.3px;background:#ffffff;"></div><span class="t" style="left:225.70px;top:435.46px;font-size:9.5px;line-height:9.5px;color:#3a7cc3;transform:scaleX(0.9036);">Result 1</span><svg class="r" style="left:263.3px;top:437.3px;" width="7" height="7" viewBox="0 0 7 7"><path d="M0.8 0.8 L6.2 6.2 M6.2 0.8 L0.8 6.2" stroke="#606060" stroke-width="1"/></svg><svg class="r" style="left:921.6px;top:436.2px;" width="8" height="8" viewBox="0 0 8 8"><circle cx="4" cy="4" r="3.8" fill="#2f84d6"/><rect x="3.4" y="1.4" width="1.3" height="1.2" fill="#fff"/><rect x="3.4" y="3.2" width="1.3" height="3.5" fill="#fff"/></svg><span class="t" style="left:937.00px;top:435.96px;font-size:9.5px;line-height:9.5px;color:#1e1e1e;transform:scaleX(0.8732);">Read Only</span><div class="r" style="left:220px;top:452px;width:965.3px;height:15.8px;background:#e5e5e5;"></div><span class="t" style="left:225.50px;top:454.76px;font-size:9.5px;line-height:9.5px;color:#6e6e6e;transform:scaleX(0.9183);">Output</span><svg class="r" style="left:255px;top:458.0px" width="927" height="4.6"><defs><pattern id="gp255_460" width="3" height="3.2" patternUnits="userSpaceOnUse"><rect x="0.6" y="0" width="1.1" height="0.9" fill="#c6c6c6"/><rect x="2.1" y="1.6" width="1.1" height="0.9" fill="#c6c6c6"/></pattern></defs><rect x="0" y="0.1" width="927" height="4.4" fill="url(#gp255_460)"/></svg><div class="r" style="left:220px;top:467.8px;width:965.3px;height:21.2px;background:#f2f2f4;"></div><svg class="r" style="left:225.8px;top:474px;" width="11.5" height="11.5" viewBox="0 0 11.5 11.5"><rect x="0.6" y="3.2" width="6.8" height="7.6" fill="#fff" stroke="#555" stroke-width="1"/><path d="M2.5 3.2 V1.6 H9.2 V8.6 H7.4 M4.2 1.6 V0.6 H10.8 V7 H9.2" fill="none" stroke="#6a6a6a" stroke-width="0.8"/></svg><div class="r" style="left:242px;top:471.7px;width:116px;height:15.5px;background:#ffffff;"></div><div class="r" style="left:348.3px;top:472.3px;width:8.7px;height:14.3px;background:#efefef;"></div><span class="t" style="left:244.70px;top:474.26px;font-size:9.5px;line-height:9.5px;color:#1e1e1e;transform:scaleX(0.7922);">Action Output</span><svg class="r" style="left:350.9px;top:477.8px;" width="4.2" height="3" viewBox="0 0 4.2 3"><polygon points="0,0 4.5,0 2.25,2.8" fill="#1a1a1a"/></svg><div class="r" style="left:220px;top:489px;width:965.3px;height:67.8px;background:#ffffff;"></div><div class="r" style="left:236.7px;top:490px;width:0.8px;height:13px;background:#e2e2e2;"></div><div class="r" style="left:264.5px;top:490px;width:0.8px;height:13px;background:#e2e2e2;"></div><div class="r" style="left:304.1px;top:490px;width:0.8px;height:13px;background:#e2e2e2;"></div><div class="r" style="left:477.8px;top:490px;width:0.8px;height:13px;background:#e2e2e2;"></div><div class="r" style="left:1084.5px;top:490px;width:0.8px;height:13px;background:#e2e2e2;"></div><div class="r" style="left:1171px;top:490px;width:0.8px;height:13px;background:#e2e2e2;"></div><span class="t" style="left:241.50px;top:492.30px;font-size:8.5px;line-height:8.5px;color:#2a2a2a;transform:scaleX(0.9505);">#</span><span class="t" style="left:270.00px;top:492.30px;font-size:8.5px;line-height:8.5px;color:#2a2a2a;transform:scaleX(0.8343);">Time</span><span class="t" style="left:309.20px;top:492.30px;font-size:8.5px;line-height:8.5px;color:#2a2a2a;transform:scaleX(0.9101);">Action</span><span class="t" style="left:483.00px;top:492.30px;font-size:8.5px;line-height:8.5px;color:#2a2a2a;transform:scaleX(0.8493);">Message</span><span class="t" style="left:1089.60px;top:492.30px;font-size:8.5px;line-height:8.5px;color:#2a2a2a;transform:scaleX(0.9126);">Duration / Fetch</span><svg class="r" style="left:223.6px;top:506.8px;" width="9.4" height="9.4" viewBox="0 0 9.4 9.4"><circle cx="4.7" cy="4.7" r="4.5" fill="#15a34a"/><path d="M2.4 4.9 L4.1 6.5 L7 3.4" fill="none" stroke="#fff" stroke-width="1.3"/></svg><span class="t" style="left:251.00px;top:506.06px;font-size:9.5px;line-height:9.5px;color:#1e1e1e;transform:scaleX(0.8981);">19</span><span class="t" style="left:267.10px;top:506.06px;font-size:9.5px;line-height:9.5px;color:#1e1e1e;transform:scaleX(0.8733);">21:23:15</span><span class="t" style="left:307.00px;top:506.06px;font-size:9.5px;line-height:9.5px;color:#1e1e1e;transform:scaleX(0.8682);">WITH SalaryBuckets AS ( SELECT name, s...</span><span class="t" style="left:480.00px;top:506.06px;font-size:9.5px;line-height:9.5px;color:#1e1e1e;transform:scaleX(0.8432);">4 row(s) returned</span><span class="t" style="left:1087.00px;top:506.06px;font-size:9.5px;line-height:9.5px;color:#1e1e1e;transform:scaleX(0.8969);">0.000 sec / 0.000 sec</span><div class="r" style="left:220.7px;top:521.2px;width:16.0px;height:16px;background:#e9f1fc;"></div><div class="r" style="left:237.5px;top:521.2px;width:27.0px;height:16px;background:#e9f1fc;"></div><div class="r" style="left:265.3px;top:521.2px;width:38.80000000000001px;height:16px;background:#e9f1fc;"></div><div class="r" style="left:304.9px;top:521.2px;width:172.90000000000003px;height:16px;background:#e9f1fc;"></div><div class="r" style="left:478.6px;top:521.2px;width:605.9px;height:16px;background:#e9f1fc;"></div><div class="r" style="left:1085.3px;top:521.2px;width:85.70000000000005px;height:16px;background:#e9f1fc;"></div><svg class="r" style="left:223.6px;top:523.8px;" width="9.4" height="9.4" viewBox="0 0 9.4 9.4"><circle cx="4.7" cy="4.7" r="4.5" fill="#15a34a"/><path d="M2.4 4.9 L4.1 6.5 L7 3.4" fill="none" stroke="#fff" stroke-width="1.3"/></svg><span class="t" style="left:251.00px;top:523.06px;font-size:9.5px;line-height:9.5px;color:#1e1e1e;transform:scaleX(0.8981);">20</span><span class="t" style="left:267.10px;top:523.06px;font-size:9.5px;line-height:9.5px;color:#1e1e1e;transform:scaleX(0.8733);">21:24:28</span><span class="t" style="left:307.00px;top:523.06px;font-size:9.5px;line-height:9.5px;color:#1e1e1e;transform:scaleX(0.8573);">SELECT name, salary, CASE WHEN salary ...</span><span class="t" style="left:480.00px;top:523.06px;font-size:9.5px;line-height:9.5px;color:#1e1e1e;transform:scaleX(0.8479);">100 row(s) returned</span><span class="t" style="left:1087.00px;top:523.06px;font-size:9.5px;line-height:9.5px;color:#1e1e1e;transform:scaleX(0.8969);">0.000 sec / 0.000 sec</span><svg class="r" style="left:223.6px;top:540.8px;" width="9.4" height="9.4" viewBox="0 0 9.4 9.4"><circle cx="4.7" cy="4.7" r="4.5" fill="#15a34a"/><path d="M2.4 4.9 L4.1 6.5 L7 3.4" fill="none" stroke="#fff" stroke-width="1.3"/></svg><span class="t" style="left:251.00px;top:540.06px;font-size:9.5px;line-height:9.5px;color:#1e1e1e;transform:scaleX(0.8981);">21</span><span class="t" style="left:267.10px;top:540.06px;font-size:9.5px;line-height:9.5px;color:#1e1e1e;transform:scaleX(0.8733);">21:25:03</span><span class="t" style="left:307.00px;top:540.06px;font-size:9.5px;line-height:9.5px;color:#1e1e1e;transform:scaleX(0.8573);">SELECT name, salary, CASE WHEN salary ...</span><span class="t" style="left:480.00px;top:540.06px;font-size:9.5px;line-height:9.5px;color:#1e1e1e;transform:scaleX(0.8479);">100 row(s) returned</span><span class="t" style="left:1087.00px;top:540.06px;font-size:9.5px;line-height:9.5px;color:#1e1e1e;transform:scaleX(0.8969);">0.000 sec / 0.000 sec</span><div class="r" style="left:1172px;top:489px;width:13.3px;height:67.8px;background:#f3f3f3;"></div><div class="r" style="left:1173.5px;top:530.7px;width:11px;height:12.9px;background:#cdcdcd;"></div><svg class="r" style="left:1175.5px;top:494px;" width="7" height="5" viewBox="0 0 7 5"><path d="M0.8 4.2 L3.5 1.2 L6.2 4.2" fill="none" stroke="#404040" stroke-width="1.1"/></svg><svg class="r" style="left:1175.5px;top:547.5px;" width="7" height="5" viewBox="0 0 7 5"><path d="M0.8 0.8 L3.5 3.8 L6.2 0.8" fill="none" stroke="#404040" stroke-width="1.1"/></svg><div class="r" style="left:982px;top:5px;width:203.3px;height:16px;background:#e5e5e5;"></div><span class="t" style="left:987.90px;top:7.76px;font-size:9.5px;line-height:9.5px;color:#6e6e6e;transform:scaleX(0.9364);">SQLAdditions</span><svg class="r" style="left:1044px;top:10.8px" width="138" height="4.6"><defs><pattern id="gp1044_13" width="3" height="3.2" patternUnits="userSpaceOnUse"><rect x="0.6" y="0" width="1.1" height="0.9" fill="#c6c6c6"/><rect x="2.1" y="1.6" width="1.1" height="0.9" fill="#c6c6c6"/></pattern></defs><rect x="0" y="0.1" width="138" height="4.4" fill="url(#gp1044_13)"/></svg><div class="r" style="left:982px;top:21px;width:203.3px;height:20.8px;background:#f3f3f5;"></div><svg class="r" style="left:991.6px;top:28px;" width="6.5" height="8" viewBox="0 0 6.5 8"><polygon points="6.5,0 0,4 6.5,8" fill="#bdbdbd"/></svg><svg class="r" style="left:1013.6px;top:28px;" width="6.5" height="8" viewBox="0 0 6.5 8"><polygon points="0,0 6.5,4 0,8" fill="#bdbdbd"/></svg><div class="r" style="left:1029.8px;top:26px;width:1px;height:12px;background:#b9c6d4;"></div><svg class="r" style="left:1036px;top:24.8px;" width="12.5" height="13.5" viewBox="0 0 12.5 13.5"><rect x="0.6" y="0.6" width="11.4" height="12.2" rx="1.5" fill="#ededed" stroke="#9a9a9a" stroke-width="1"/><path d="M3.8 2.8 V10.8 M5.8 2.8 V10.8 M3 2.8 H6.6 M3 10.8 H6.6" stroke="#666" stroke-width="0.8"/><text x="7" y="11" font-size="6.5" font-family="Liberation Sans" font-weight="bold" fill="#333">?</text></svg><svg class="r" style="left:1056.5px;top:25px;" width="14" height="14" viewBox="0 0 14 14"><path d="M3.5 0.5 L7 0.5 L5 3 L6.5 3 L1.5 7.5 L3 4.2 L1 4.2 Z" fill="#e9c53c"/><path d="M5 4.5 V12 M7 4.5 V12 M4.2 4.5 H7.8 M4.2 12 H7.8" stroke="#777" stroke-width="0.8"/><text x="8" y="12.5" font-size="6.5" font-family="Liberation Sans" font-weight="bold" fill="#333">?</text></svg><div class="r" style="left:1076.3px;top:26px;width:1px;height:12px;background:#b9c6d4;"></div><div class="r" style="left:1080px;top:24px;width:93.3px;height:15.2px;background:#ffffff;"></div><div class="r" style="left:1164.4px;top:24.2px;width:8.8px;height:14.8px;background:#f1f1f1;"></div><span class="t" style="left:1082.00px;top:27.16px;font-size:9.5px;line-height:9.5px;color:#1e1e1e;transform:scaleX(0.8433);">Jump to</span><svg class="r" style="left:1166.5px;top:30.3px;" width="4.5" height="3" viewBox="0 0 4.5 3"><polygon points="0,0 4.5,0 2.25,2.8" fill="#1a1a1a"/></svg><div class="r" style="left:982px;top:41.8px;width:203.3px;height:391.2px;background:#ffffff;"></div><span class="t" style="left:1003.20px;top:53.17px;font-size:12.2px;line-height:12.2px;color:#848484;font-weight:bold;transform:scaleX(1.0936);">Automatic context help is</span><span class="t" style="left:996.80px;top:67.87px;font-size:12.2px;line-height:12.2px;color:#848484;font-weight:bold;transform:scaleX(1.0950);">disabled. Use the toolbar to</span><span class="t" style="left:1004.90px;top:82.57px;font-size:12.2px;line-height:12.2px;color:#848484;font-weight:bold;transform:scaleX(1.1009);">manually get help for the</span><span class="t" style="left:999.45px;top:97.27px;font-size:12.2px;line-height:12.2px;color:#848484;font-weight:bold;transform:scaleX(1.0896);">current caret position or to</span><span class="t" style="left:1013.55px;top:111.97px;font-size:12.2px;line-height:12.2px;color:#848484;font-weight:bold;transform:scaleX(1.0940);">toggle automatic help.</span><div class="r" style="left:982px;top:433px;width:203.3px;height:14.3px;background:#e5e5e5;"></div><div class="r" style="left:982.3px;top:433px;width:62.7px;height:14.3px;background:#ffffff;"></div><span class="t" style="left:988.00px;top:435.76px;font-size:9.5px;line-height:9.5px;color:#3a7cc3;transform:scaleX(0.9140);">Context Help</span><span class="t" style="left:1050.50px;top:435.76px;font-size:9.5px;line-height:9.5px;color:#2b2b2b;transform:scaleX(0.9058);">Snippets</span><div class="r" style="left:1187.8px;top:0px;width:2.2px;height:561px;background:#e4e4e6;"></div></body></html>
